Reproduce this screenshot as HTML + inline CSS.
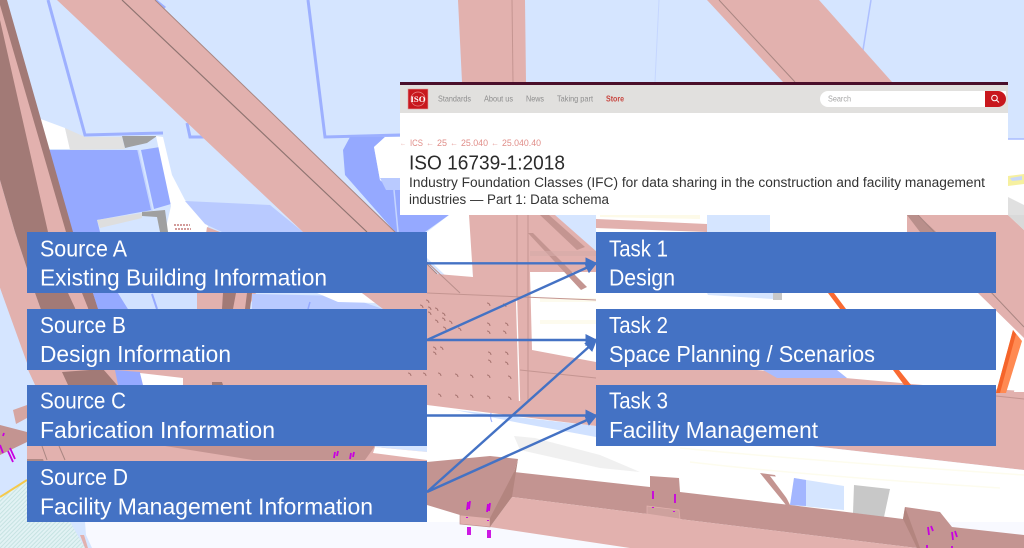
<!DOCTYPE html>
<html lang="en">
<head>
<meta charset="utf-8">
<title>ISO 16739 Sources and Tasks</title>
<style>
html,body{margin:0;padding:0;width:1024px;height:548px;overflow:hidden;background:#d5e5ff}
svg{display:block}
text{font-family:"Liberation Sans",sans-serif}
.w{fill:#fff;font-size:23px}
.n{fill:#8d8d8d;font-size:8.5px}
.b{fill:#e08d88;font-size:9.5px}
.d{fill:#333;font-size:13.5px}
</style>
</head>
<body>
<svg width="1024" height="548" viewBox="0 0 1024 548" xmlns="http://www.w3.org/2000/svg">
<defs>
<pattern id="h" width="3" height="3" patternUnits="userSpaceOnUse" patternTransform="rotate(45)">
<rect width="3" height="3" fill="#e2f2f4"/><rect width="1" height="3" fill="#c6e3e2"/>
</pattern>
<marker id="a" markerWidth="5" markerHeight="5" refX="4.4" refY="2.5" orient="auto" markerUnits="strokeWidth">
<path d="M0 0L5 2.5L0 5z" fill="#4472c4"/>
</marker>
</defs>

<rect width="1024" height="548" fill="#d5e5ff"/>

<!-- window outlines upper left -->
<path d="M48 0L85 135L163 133" fill="none" stroke="#9db0ff" stroke-width="3"/>
<path d="M155 0L165 8" fill="none" stroke="#9db0ff" stroke-width="3"/>
<path d="M187 123L190 137L204 137" fill="none" stroke="#9db0ff" stroke-width="3"/>
<path d="M308 0L325 137L400 135" fill="none" stroke="#9db0ff" stroke-width="3"/>
<path d="M659 0L655 82" fill="none" stroke="#c5d6ff" stroke-width="1"/>
<path d="M871 0L863 50" fill="none" stroke="#adbfff" stroke-width="1.5"/>

<!-- left window cluster -->
<polygon points="30,115 65,128 70,149 40,149" fill="#fff"/>
<polygon points="65,128 85,137 122,137 125,149 70,150" fill="#e2e2e2"/>
<polygon points="122,136 157,136 147,143 125,148" fill="#a0a0a0"/>
<polygon points="40,150 138,150 152,210 97,220 100,232 60,232" fill="#95a9ff"/>
<polygon points="141,150 160,147 171,204 154,209" fill="#95a9ff"/>
<path d="M138 150L152 211" stroke="#c5d5ff" stroke-width="1.5" fill="none"/>
<polygon points="156,136 163,137 172,175 185,200 208,226 208,232 165,232 171,206" fill="#fff"/>
<polygon points="185,201 270,205 303,232 222,232 205,224" fill="#b9caff"/>
<polygon points="97,220 142,213 142,218 100,228" fill="#dedede"/>
<polygon points="142,212 165,210 168,232 160,232 157,217 142,216" fill="#a0a0a0"/>
<path d="M174 225H190M175 229H191" stroke="#b9615f" stroke-width="1.2" stroke-dasharray="2 1"/>
<polygon points="207,227 220,232 256,293 247,310 197,310 197,293" fill="#e2b1ae"/>

<!-- right of big beam -->
<polygon points="350,137 385,137 374,147 380,180 392,190 400,190 400,215 449,215 425,232 395,232 345,175 343,150" fill="#95a9ff"/>
<polygon points="374,147 385,137 400,137 400,190 392,190 380,180" fill="#fff"/>
<polygon points="380,178 400,178 400,190 386,190" fill="#b9caff"/>
<path d="M394 190L398 232" stroke="#c5d5ff" stroke-width="1.5"/>
<polygon points="427,232 449,215 470,215 473,277 447,277 427,258" fill="#fff"/>

<!-- big diagonal beam -->
<polygon points="57,0 155,0 395,232 440,277 360,295 303,232" fill="#e2b1ae"/>
<path d="M122 0L367 232" stroke="#8f7471" stroke-width="1.2" fill="none"/>
<path d="M155 0L395 232L437 274" stroke="#a98682" stroke-width="1" fill="none"/>

<!-- far left beam -->
<polygon points="0,180 15,232 35,293 68,385 35,385 0,288" fill="#e2b1ae"/>
<polygon points="0,0 7,0 73,232 93,293 98,308 115,385 68,385 35,293 15,232 0,180" fill="#a27a76"/>
<polygon points="0,5 66,232 82,293 88,308 103,370 92,370 75,308 68,293 48,232 0,20" fill="#e2b1ae"/>

<!-- gap source A/B -->
<polygon points="93,293 118,293 128,309 98,309" fill="#95a9ff"/>
<polygon points="118,293 197,293 197,309 128,309" fill="#d0e1ff"/>
<path d="M152 294L157 309" stroke="#95a9ff" stroke-width="2"/>
<polygon points="223,293 236,293 233,309 222,309" fill="#a27a76"/>
<polygon points="247,293 252,293 250,309 245,309" fill="#a27a76"/>
<polygon points="252,294 345,296 383,309 252,309" fill="#b9caff"/>
<polygon points="317,293 362,293 377,303 338,302" fill="#fff"/>
<path d="M310 302L308 309" stroke="#95a9ff" stroke-width="1.5"/>

<!-- plate and pink behind -->
<polygon points="469,215 555,215 597,252 596,460 427,405 383,309 362,293 437,274 473,277" fill="#e2b1ae"/>
<polygon points="28,370 427,370 427,405 376,405 183,390 183,385 35,385" fill="#e2b1ae"/>
<polygon points="427,292 596,292 596,426 427,405" fill="#e2b1ae"/>
<polygon points="62,372 103,369 117,385 68,385" fill="#a27a76"/>
<polygon points="115,370 140,372 143,385 118,385" fill="#95a9ff"/>
<polygon points="140,373 183,378 183,385 143,385" fill="#fff"/>
<polygon points="212,382 222,382 223,385 212,385" fill="#a27a76"/>
<polygon points="0,288 28,370 35,385 0,385" fill="#d5e5ff"/>

<!-- right-hand window in plate -->
<polygon points="530,272 596,272 596,362 532,350" fill="#fff"/>
<path d="M540 300H596M540 322H596" stroke="#fdfbee" stroke-width="4"/>
<polygon points="528,233 533,233 587,287 581,290" fill="#c49591"/>
<polygon points="540,215 549,215 585,247 577,250" fill="#c49591"/>
<polygon points="530,251 596,251 596,256 530,256" fill="#d5aaa6" opacity=".6"/>
<path d="M517 215V298" stroke="#c49591" stroke-width="1"/>
<path d="M528 215V400" stroke="#c49591" stroke-width="1"/>
<path d="M516.5 298L519.5 401" stroke="#fff" stroke-width="1.3"/>
<path d="M427 293L596 300" stroke="#c49591" stroke-width="1" fill="none"/>
<path d="M427 262L460 293" stroke="#b98f8b" stroke-width="1" fill="none"/>
<path d="M520 370L596 378" stroke="#c49591" stroke-width="1" fill="none"/>
<path fill="none" stroke="#a5736f" stroke-width="1" d="M487 303a3 3 0 0 1 3 3M503 304a3 3 0 0 1 3 3M487 323a3 3 0 0 1 3 3M505 323a3 3 0 0 1 3 3M487 331a3 3 0 0 1 3 3M503 331a3 3 0 0 1 3 3M488 352a3 3 0 0 1 3 3M505 352a3 3 0 0 1 3 3M488 360a3 3 0 0 1 3 3M505 362a3 3 0 0 1 3 3M426 300a3 3 0 0 1 3 3M420 305a3 3 0 0 1 3 3M428 307a3 3 0 0 1 3 3M435 308a3 3 0 0 1 3 3M442 313a3 3 0 0 1 3 3M428 312a3 3 0 0 1 3 3M435 320a3 3 0 0 1 3 3M442 318a3 3 0 0 1 3 3M449 321a3 3 0 0 1 3 3M443 327a3 3 0 0 1 3 3M458 328a3 3 0 0 1 3 3M433 347a3 3 0 0 1 3 3M440 347a3 3 0 0 1 3 3M433 352a3 3 0 0 1 3 3M408 373a3 3 0 0 1 3 3M423 373a3 3 0 0 1 3 3M438 373a3 3 0 0 1 3 3M455 374a3 3 0 0 1 3 3M470 375a3 3 0 0 1 3 3M487 375a3 3 0 0 1 3 3M508 376a3 3 0 0 1 3 3M408 394a3 3 0 0 1 3 3M423 394a3 3 0 0 1 3 3M438 394a3 3 0 0 1 3 3M455 395a3 3 0 0 1 3 3M470 395a3 3 0 0 1 3 3M487 396a3 3 0 0 1 3 3M508 397a3 3 0 0 1 3 3"/>

<!-- gaps near tasks -->
<polygon points="596,215 1024,215 1024,392 596,392" fill="#fff"/>
<polygon points="596,219 707,224 707,232 596,228" fill="#e2b1ae"/>
<polygon points="600,215 700,215 700,219 600,217" fill="#fdfae8"/>
<polygon points="707,215 770,215 770,232 707,232" fill="#d5e5ff"/>
<polygon points="772,223 816,227 815,232 772,232" fill="#e2b1ae"/>
<polygon points="707,293 773,293 773,299 708,295" fill="#d5e5ff"/>
<polygon points="773,293 782,293 782,300 773,300" fill="#c8c8c8"/>
<polygon points="828,293 834,293 846,309 840,309" fill="#f96a32"/>
<!-- right beam -->
<polygon points="907,215 1008,215 1024,230 1024,338 978,293 907,232" fill="#e2b1ae"/>
<polygon points="907,215 918,215 936,232 920,232" fill="#b98f8b"/>
<polygon points="1008,215 1024,215 1024,230" fill="#d9d9d9"/>
<path d="M918 215L1024 327" stroke="#a98682" stroke-width="1" fill="none"/>

<polygon points="596,370 757,370 923,385 1024,391 1024,470 812,446 596,446" fill="#e2b1ae"/>
<polygon points="763,370 837,370 847,378 777,378" fill="#a9bcff"/>
<polygon points="893,370 899,370 911,385 904,385" fill="#f96a32"/>
<!-- orange strut drawn above pink -->
<polygon points="1013,330 1022,341 1006,393 996,393" fill="#ff8a52"/>
<polygon points="1013,330 1016,334 1000,393 996,393" fill="#f5642a"/>
<polygon points="1024,346 1024,392 1014,392" fill="#fff"/>
<path d="M996 396L1024 399" stroke="#c49591" stroke-width="1"/>

<!-- white floor -->
<polygon points="376,447 427,452 427,405 596,426 596,446 812,446 1024,470 1024,548 0,548 427,522" fill="#fff"/>
<polygon points="455,410 596,426 596,437 520,423" fill="#d0e1ff"/>
<path d="M491 413q-1 6 1 9" stroke="#95a9ff" stroke-width="1" fill="none"/>
<polygon points="514,436 535,438 600,455 640,472 600,468 520,450" fill="#e6e6e6" opacity=".6"/>
<path d="M680 448Q800 460 1024 475M690 462Q800 475 1000 488" stroke="#fdfcee" stroke-width="1.5" fill="none"/>
<polygon points="760,473 775,475 790,505 786,505" fill="#c49591"/>
<polygon points="770,476 790,478 795,494 788,500" fill="#fff"/>
<polygon points="794,478 844,486 844,510 790,505" fill="#d5e5ff"/>
<polygon points="794,478 806,480 806,506 790,505" fill="#a3b6ff"/>
<polygon points="854,485 890,489 884,517 853,513" fill="#c8c8c8"/>

<!-- far bottom fill -->
<rect x="427" y="522" width="597" height="26" fill="#f8f9ff"/>
<polygon points="85,522 427,522 427,548 87,548" fill="#f8f9ff"/>

<!-- left gap bottom -->
<polygon points="27,405 27,461 427,462 427,452 376,447 165,440" fill="#e2b1ae"/>
<polygon points="165,446 375,446 365,460 253,460" fill="#c39491"/>
<polygon points="375,447 427,452 427,460 373,453" fill="#fff"/>
<polygon points="0,425 27,432 27,442 0,455" fill="#c39491"/>
<polygon points="13,410 27,405 27,418 16,424" fill="#d6a6a2"/>
<polygon points="27,446 32,446 42,461 37,461" fill="#e2b1ae"/>
<path d="M42 446L47 460M59 446L65 460" stroke="#a98682" stroke-width="1"/>
<polygon points="27,459 43,459 44,462 27,462" fill="#b08a86"/>
<polygon points="0,497 27,480 27,522 70,522 85,548 0,548" fill="url(#h)"/>
<path d="M0 497L27 480" stroke="#f5c94c" stroke-width="2"/>
<polygon points="27,461 27,522 80,522 92,548 85,548 70,522 27,480" fill="#d5e5ff"/>
<polygon points="80,535 84,535 88,548 85,548" fill="#e2b1ae"/>
<polygon points="27,522 70,522 85,548 27,548" fill="url(#h)"/>

<!-- bottom beam -->
<polygon points="427,462 490,456 518,459 514,472 650,487 650,476 679,478 680,492 790,505 903,519 905,507 940,512 952,527 1024,535 1024,548 917,548 679,519 647,514 512,497 490,518 460,515 427,505" fill="#c39491"/>
<polygon points="512,497 647,514 679,519 917,548 630,548 490,527" fill="#e2b1ae"/>
<polygon points="647,506 679,510 680,519 647,514" fill="#cea19d" stroke="#e2b1ae" stroke-width=".7"/>
<polygon points="460,515 490,518 490,527 460,524" fill="#e2b1ae" stroke="#c39491" stroke-width=".7"/>
<polygon points="490,518 490,527 512,497 518,459 514,472" fill="#b3857f"/>
<polygon points="903,519 905,507 920,548 917,548" fill="#b3857f"/>

<!-- purple marks -->
<g stroke="#c800e0" stroke-width="1.8" fill="none">
<path d="M653 491V499M675 494V503M653 507v1M674 511v1M4 433l-1 3M0 445l3 8M8 451l5 11M10 448l5 11"/>
<path d="M335 452l-1 6M338 451l-1 5M351 453l-1 6M354 452l-1 5"/>
<path d="M468 502l-1 8M470 501l-1 8M488 504l-1 8M490 503l-1 8M468 527v8M470 527v8M488 530v8M490 530v8M467 517v1M488 520v1"/>
<path d="M928 527l1 8M931 526l2 5M952 532l1 8M955 531l2 6M927 545v3M952 546v2"/>
</g>

<!-- top beams -->
<polygon points="458,0 525,0 526,82 462,82" fill="#e2b1ae"/>
<path d="M512 0L513 82" stroke="#c49591" stroke-width="1"/>
<polygon points="707,0 819,0 892,82 783,82" fill="#e2b1ae"/>
<path d="M719 0L795 82" stroke="#a98682" stroke-width="1" fill="none"/>

<!-- right of panel -->
<rect x="1008" y="139" width="16" height="76" fill="#fff"/>
<path d="M1008 139H1024" stroke="#a9bcff" stroke-width="1.5"/>
<polygon points="1008,176 1024,174 1024,184 1008,186" fill="#f6f0a0"/>
<polygon points="1010,178 1022,176 1022,180 1012,181" fill="#c9d8f8"/>
<polygon points="1008,197 1024,205 1024,215 1008,215" fill="#e0e0e0"/>
<rect x="770" y="215" width="137" height="17" fill="#fff"/>

<!-- ISO panel -->
<rect x="400" y="82" width="608" height="133" fill="#fff"/>
<rect x="400" y="82" width="608" height="3" fill="#4a0f2a"/>
<rect x="400" y="85" width="608" height="28" fill="#e1e0de"/>
<rect x="408" y="89" width="20" height="20" fill="#c8171d" stroke="#e2a09f" stroke-width=".6"/>
<circle cx="418" cy="99" r="7" fill="none" stroke="#e98686" stroke-width=".7"/>
<text x="410.5" y="102" fill="#fff" style="font-size:8.5px;font-weight:bold;font-family:'Liberation Serif',serif" textLength="15" lengthAdjust="spacingAndGlyphs">ISO</text>
<text class="n" x="438" y="101.5" textLength="33" lengthAdjust="spacingAndGlyphs">Standards</text>
<text class="n" x="484" y="101.5" textLength="29" lengthAdjust="spacingAndGlyphs">About us</text>
<text class="n" x="526" y="101.5" textLength="18" lengthAdjust="spacingAndGlyphs">News</text>
<text class="n" x="557" y="101.5" textLength="36" lengthAdjust="spacingAndGlyphs">Taking part</text>
<text x="606" y="101.5" fill="#c8453f" style="font-size:8.5px;font-weight:bold" textLength="18" lengthAdjust="spacingAndGlyphs">Store</text>
<path d="M828 91H1006V99a8 8 0 0 1-8 8H828a8 8 0 0 1 0-16z" fill="#fff"/>
<path d="M985 91H998a8 8 0 0 1 8 8a8 8 0 0 1-8 8H985z" fill="#c8171d"/>
<text x="828" y="101.5" fill="#a5a5a5" style="font-size:8.5px" textLength="23" lengthAdjust="spacingAndGlyphs">Search</text>
<circle cx="994.5" cy="98" r="2.8" fill="none" stroke="#fff" stroke-width="1"/>
<path d="M996.6 100.2L999 102.5" stroke="#fff" stroke-width="1"/>

<text class="b" x="400" y="146" opacity=".6" textLength="6" lengthAdjust="spacingAndGlyphs">←</text>
<text class="b" x="410" y="146" textLength="13" lengthAdjust="spacingAndGlyphs">ICS</text>
<text class="b" x="426" y="146" opacity=".8" textLength="8" lengthAdjust="spacingAndGlyphs">←</text>
<text class="b" x="437" y="146" textLength="10" lengthAdjust="spacingAndGlyphs">25</text>
<text class="b" x="450" y="146" opacity=".8" textLength="8" lengthAdjust="spacingAndGlyphs">←</text>
<text class="b" x="461" y="146" textLength="27" lengthAdjust="spacingAndGlyphs">25.040</text>
<text class="b" x="491" y="146" opacity=".8" textLength="8" lengthAdjust="spacingAndGlyphs">←</text>
<text class="b" x="502" y="146" textLength="39" lengthAdjust="spacingAndGlyphs">25.040.40</text>
<text x="409" y="169.5" fill="#2b2b2b" style="font-size:20px" textLength="156" lengthAdjust="spacingAndGlyphs">ISO 16739-1:2018</text>
<text class="d" x="409" y="187" textLength="576" lengthAdjust="spacingAndGlyphs">Industry Foundation Classes (IFC) for data sharing in the construction and facility management</text>
<text class="d" x="409" y="204" textLength="200" lengthAdjust="spacingAndGlyphs">industries — Part 1: Data schema</text>

<!-- arrows -->
<g stroke="#4472c4" stroke-width="2.4" fill="none">
<path d="M427 263.3H596" marker-end="url(#a)"/>
<path d="M427 340L596 263.5" marker-end="url(#a)"/>
<path d="M427 340H596" marker-end="url(#a)"/>
<path d="M427 415.5H596" marker-end="url(#a)"/>
<path d="M427 492L596 340.5" marker-end="url(#a)"/>
<path d="M427 492L596 416" marker-end="url(#a)"/>
</g>

<!-- boxes -->
<g fill="#4472c4">
<rect x="27" y="232" width="400" height="61"/>
<rect x="27" y="309" width="400" height="61"/>
<rect x="27" y="385" width="400" height="61"/>
<rect x="27" y="461" width="400" height="61"/>
<rect x="596" y="232" width="400" height="61"/>
<rect x="596" y="309" width="400" height="61"/>
<rect x="596" y="385" width="400" height="61"/>
</g>

<text class="w" x="40" y="256.5" textLength="87" lengthAdjust="spacingAndGlyphs">Source A</text>
<text class="w" x="40" y="285.5" textLength="287" lengthAdjust="spacingAndGlyphs">Existing Building Information</text>
<text class="w" x="40" y="333" textLength="86" lengthAdjust="spacingAndGlyphs">Source B</text>
<text class="w" x="40" y="362" textLength="191" lengthAdjust="spacingAndGlyphs">Design Information</text>
<text class="w" x="40" y="408.5" textLength="86" lengthAdjust="spacingAndGlyphs">Source C</text>
<text class="w" x="40" y="438" textLength="235" lengthAdjust="spacingAndGlyphs">Fabrication Information</text>
<text class="w" x="40" y="485" textLength="88" lengthAdjust="spacingAndGlyphs">Source D</text>
<text class="w" x="40" y="514.5" textLength="333" lengthAdjust="spacingAndGlyphs">Facility Management Information</text>

<text class="w" x="609" y="256.5" textLength="59" lengthAdjust="spacingAndGlyphs">Task 1</text>
<text class="w" x="609" y="285.5" textLength="66" lengthAdjust="spacingAndGlyphs">Design</text>
<text class="w" x="609" y="333" textLength="59" lengthAdjust="spacingAndGlyphs">Task 2</text>
<text class="w" x="609" y="362" textLength="266" lengthAdjust="spacingAndGlyphs">Space Planning / Scenarios</text>
<text class="w" x="609" y="408.5" textLength="59" lengthAdjust="spacingAndGlyphs">Task 3</text>
<text class="w" x="609" y="438" textLength="209" lengthAdjust="spacingAndGlyphs">Facility Management</text>
</svg>
</body>
</html>
